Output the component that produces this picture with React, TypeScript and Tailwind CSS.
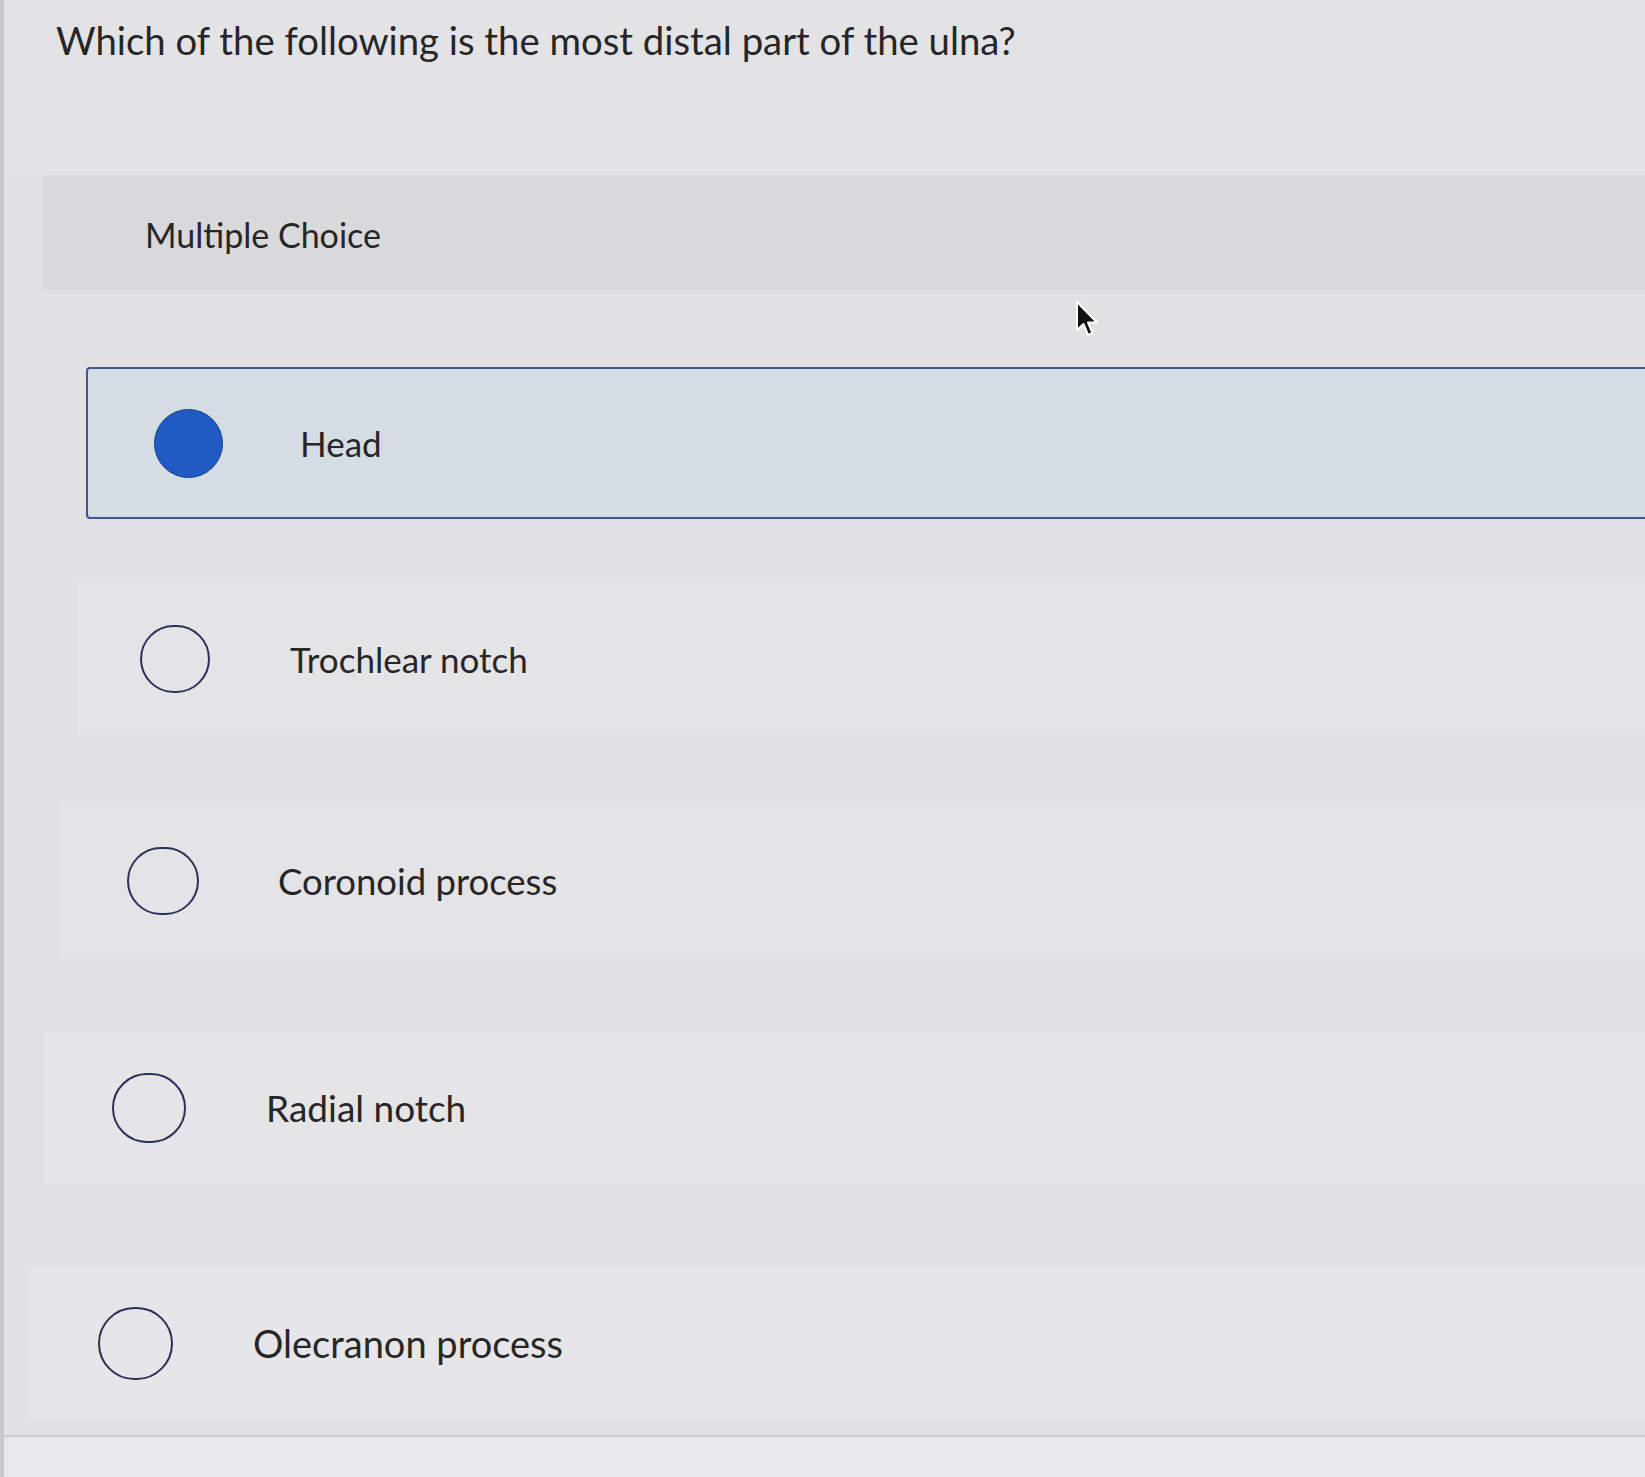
import React from 'react';

interface Choice {
    label: string;
    selected?: boolean;
    // per-row placement, the photo is shot at a slight angle
    rowClass: string;
    circleClass: string;
    textClass: string;
}

const choices: Choice[] = [
    {
        label: 'Head',
        selected: true,
        rowClass: 'mt-[77px] ml-[82px] pl-[66px] rounded-l-[4px] border-2 border-r-0 border-[#3f5690] bg-[#d4dde3]',
        circleClass: 'w-[69px] h-[69px]',
        textClass: 'ml-[77px] text-[35px]',
    },
    {
        label: 'Trochlear notch',
        rowClass: 'mt-[64px] ml-[74px] pl-[62px] bg-[#e4e4e6]',
        circleClass: 'w-[70px] h-[68px]',
        textClass: 'ml-[80px] text-[35px]',
    },
    {
        label: 'Coronoid process',
        rowClass: 'mt-[70px] ml-[56px] pl-[67px] bg-[#e4e4e6]',
        circleClass: 'w-[72px] h-[68px]',
        textClass: 'ml-[79px] text-[36.5px]',
    },
    {
        label: 'Radial notch',
        rowClass: 'mt-[75px] ml-[40px] pl-[68px] bg-[#e5e5e7]',
        circleClass: 'w-[74px] h-[70px]',
        textClass: 'ml-[80px] text-[37px]',
    },
    {
        label: 'Olecranon process',
        rowClass: 'mt-[83px] ml-[26px] pl-[68px] bg-[#e6e6e8]',
        circleClass: 'w-[75px] h-[73px]',
        textClass: 'ml-[80px] text-[38px]',
    },
];

const Cursor = () => (
    <svg
        className="absolute left-[1070px] top-[300px]"
        width="28"
        height="40"
        viewBox="0 0 28 40"
    >
        <path
            d="M3 2 L3 30 L9.5 24 L14 35 L18.5 33 L14 22.5 L23 22.5 Z"
            fill="#111"
            stroke="#fff"
            strokeWidth="2"
            strokeLinejoin="round"
        />
    </svg>
);

const App = () => {
    return (
        <div
            className="relative min-h-[1477px] overflow-hidden bg-[#e3e3e5] border-l-4 border-[#c9c9cb] text-[#262628]"
            style={{ fontFamily: 'Lato, "Open Sans", sans-serif' }}
        >
            <h1 className="pt-[16px] pl-[52px] text-[38.3px] leading-[48px] font-normal">
                Which of the following is the most distal part of the ulna?
            </h1>

            <div className="mt-[111px] bg-[#e1e1e3]">
                <div className="ml-[39px] h-[115px] bg-[#d9d9db] pl-[102px] flex items-center">
                    <span className="text-[34px] mt-[3px]">Multiple Choice</span>
                </div>

                {choices.map((c) => (
                    <div key={c.label} className={`flex items-center h-[152px] ${c.rowClass}`}>
                        <span
                            className={`shrink-0 rounded-full ${c.circleClass} ${
                                c.selected
                                    ? 'bg-[#1f5bc2] border border-[#1a3f8a]'
                                    : 'border-[2.5px] border-[#2c2f58]'
                            }`}
                        />
                        <span className={c.textClass}>{c.label}</span>
                    </div>
                ))}

                <div className="mt-[16px] border-b-2 border-[#cfcfd1]" />
            </div>
            <div className="h-[60px] bg-[#e8e8ea]" />

            <Cursor />
        </div>
    );
};

export default App;
